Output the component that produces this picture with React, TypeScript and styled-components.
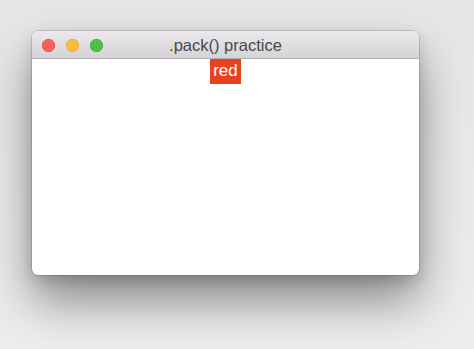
import React from 'react';
import styled, { createGlobalStyle } from 'styled-components';

const GlobalStyle = createGlobalStyle`
    html, body {
        margin: 0;
        padding: 0;
        background: #ececec;
        font-family: "Liberation Sans", Arial, sans-serif;
    }
`;

const Desktop = styled.div`
    width: 474px;
    height: 349px;
    padding: 31px 0 0 32px;
    box-sizing: border-box;
    overflow: hidden;
    background: linear-gradient(180deg, #e6e6e6 0%, #ededed 100%);
`;

const Window = styled.div`
    width: 387px;
    height: 244px;
    display: flex;
    flex-direction: column;
    border-radius: 6px;
    overflow: hidden;
    background: #ffffff;
    box-shadow: 0 0 0 0.5px rgba(0, 0, 0, 0.25), 0 26px 48px rgba(0, 0, 0, 0.42), 0 6px 14px rgba(0, 0, 0, 0.14);
`;

const TitleBar = styled.div`
    position: relative;
    height: 27px;
    flex: none;
    display: flex;
    align-items: center;
    justify-content: center;
    background: linear-gradient(180deg, #ebe9eb 0%, #d5d3d5 100%);
    border-bottom: 1px solid #b4b2b4;
`;

const Lights = styled.div`
    position: absolute;
    left: 10px;
    top: 8px;
    display: flex;
    gap: 11px;
`;

const Light = styled.span<{ $color: string; $edge: string }>`
    width: 13px;
    height: 13px;
    border-radius: 50%;
    background: ${(props) => props.$color};
    box-shadow: inset 0 0 0 0.5px ${(props) => props.$edge};
`;

const Title = styled.div`
    font-family: "Liberation Sans", Arial, sans-serif;
    font-size: 16.5px;
    color: #4a494a;
    padding-top: 1px;
`;

const Content = styled.div`
    flex: 1;
    display: flex;
    flex-direction: column;
    align-items: center;
`;

const Label = styled.div<{ $bg: string }>`
    background: ${(props) => props.$bg};
    color: #ffffff;
    font-family: "Liberation Sans", Arial, sans-serif;
    font-size: 17px;
    line-height: 26px;
    height: 26px;
    padding: 0 3px;
    margin-top: -1px;
`;

const App: React.FC = () => {
    return (
        <>
            <GlobalStyle />
            <Desktop>
                <Window>
                    <TitleBar>
                        <Lights>
                            <Light $color="#fc605b" $edge="#de4b46" />
                            <Light $color="#fdbc40" $edge="#dea036" />
                            <Light $color="#4fc045" $edge="#3aa63a" />
                        </Lights>
                        <Title>.pack() practice</Title>
                    </TitleBar>
                    <Content>
                        <Label $bg="#ea4220">red</Label>
                    </Content>
                </Window>
            </Desktop>
        </>
    );
};

export default App;
